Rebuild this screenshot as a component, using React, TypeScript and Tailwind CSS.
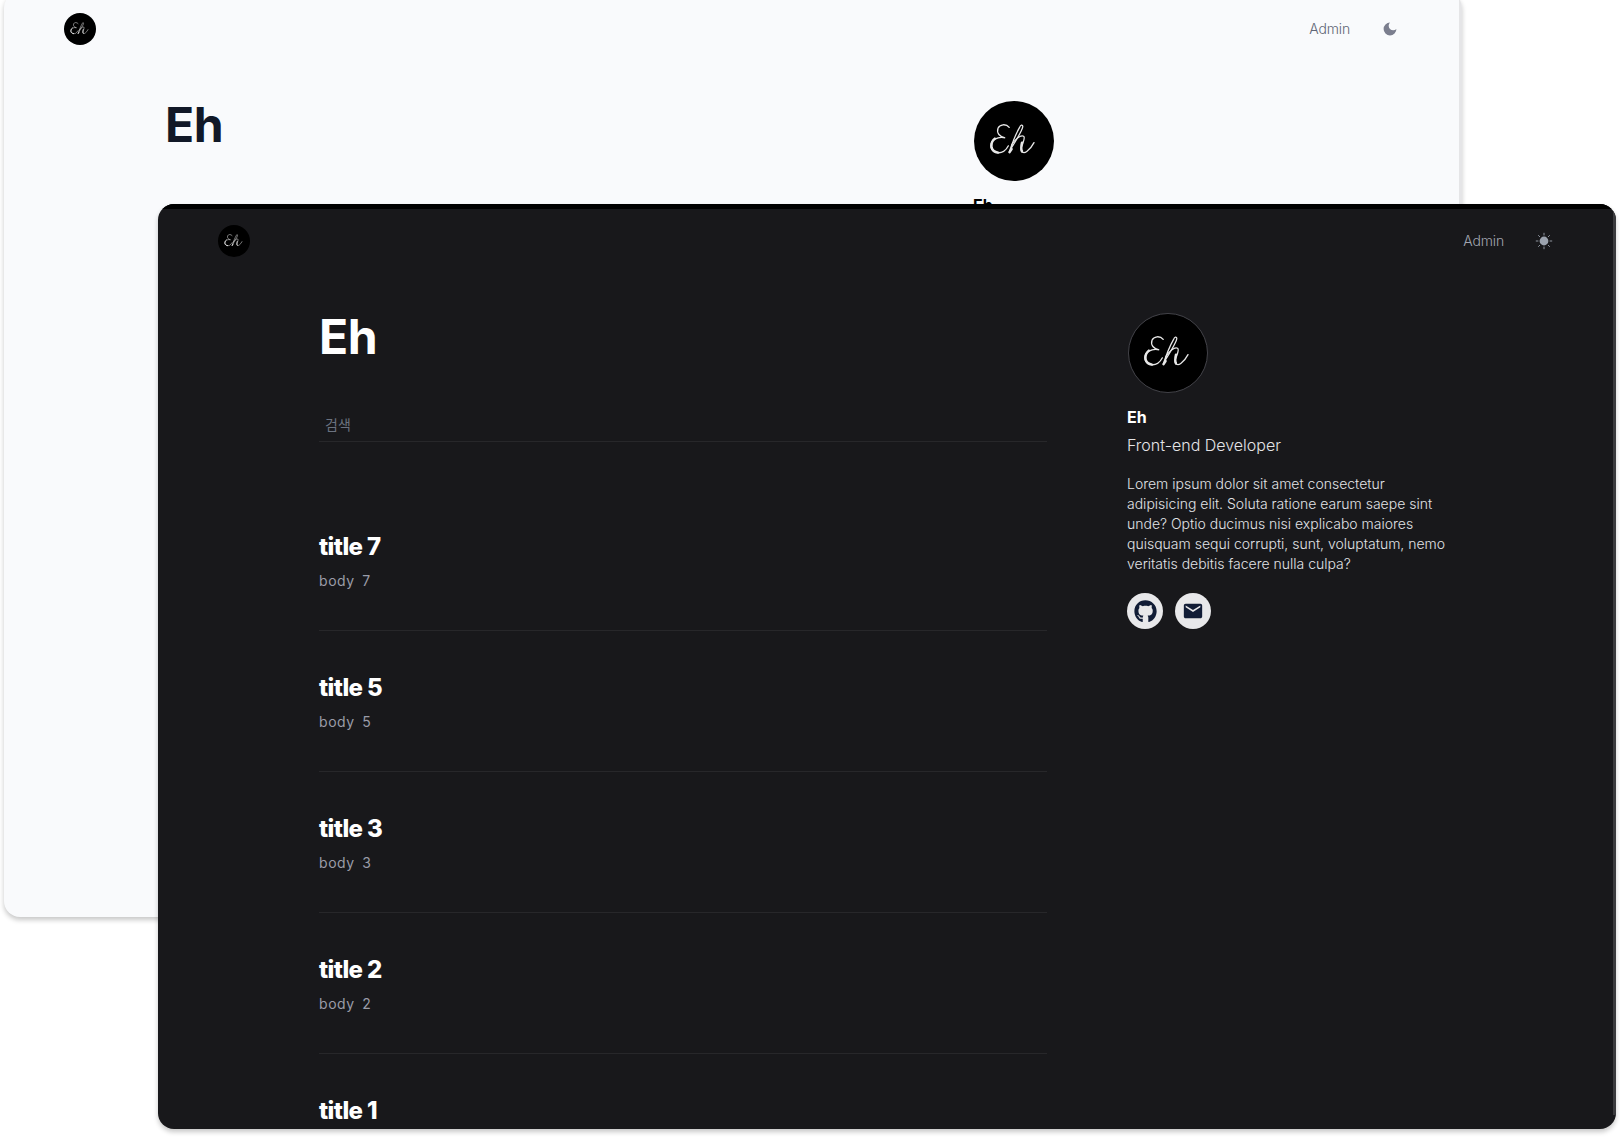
import { FaGithub } from "react-icons/fa";
import { MdEmail } from "react-icons/md";

const posts = [
  ["title 7", "body 7"],
  ["title 5", "body 5"],
  ["title 3", "body 3"],
  ["title 2", "body 2"],
  ["title 1", "body 1"],
];

function Logo({ size, border }: { size: number; border?: boolean }) {
  return (
    <svg width={size} height={size} viewBox="0 0 100 100" className="shrink-0 block">
      <circle cx="50" cy="50" r={border ? 49.4 : 50} fill="#000" stroke={border ? "#45454b" : "none"} strokeWidth={border ? 1.2 : 0} />
      <g fill="none" stroke="#e8e8e8" strokeWidth="1.6" strokeLinecap="round">
        <path d="M44 33C40 28 32 29 30 34C28 40 32 45 39 46C29 44 21 49 21 56C21 63 30 67 37 63C40 61 42 58 43 56" />
        <path d="M44 64C48 52 53 40 57 33C58 30 61 29 61 32C61 36 56 44 46 60" />
        <path d="M47 55C51 48 58 42 62 44C65 46 60 54 59 59C58 64 62 66 66 63C70 60 73 56 75 52" />
        <path d="M26 47C22 50 21.5 54 22 58C23 62 26 64 30 64.5M47 60L44.5 64M60 52C59 56 58.5 60 60 63" strokeWidth="3" />
      </g>
    </svg>
  );
}

function Sun() {
  return (
    <svg width="18" height="18" viewBox="0 0 18 18" className="block" fill="#9ca3af">
      <circle cx="9" cy="9" r="4.4" />
      <g stroke="#9ca3af" strokeWidth="0.9" strokeLinecap="round">
        <path d="M9 1.2V3M9 15V16.8M1.2 9H3M15 9H16.8M3.5 3.5L4.7 4.7M13.3 13.3L14.5 14.5M3.5 14.5L4.7 13.3M13.3 4.7L14.5 3.5" />
      </g>
    </svg>
  );
}

function Moon() {
  return (
    <svg width="14" height="14" viewBox="0 0 14 14" className="block" fill="#7b7e8e">
      <path d="M7 0.6A6.4 6.4 0 1 0 13.4 7A4.4 4.4 0 0 1 7 0.6Z" />
    </svg>
  );
}

function Window({ dark, className }: { dark: boolean; className: string }) {
  return (
    <section
      className={
        "absolute w-[1458px] h-[925px] overflow-hidden rounded-2xl shadow-[0_3px_5px_rgba(0,0,0,0.22)] " +
        (dark ? "bg-[#18181b] " : "bg-[#f9fafc] ") +
        className
      }
    >
      <div className="h-[5px] bg-black" />
      <header className="flex items-center justify-between h-[64px] pl-[60px] pr-[63px]">
        <Logo size={32} />
        <nav className="flex items-center gap-[31px]">
          <span className={"text-sm font-light tracking-[-0.01em] " + (dark ? "text-[#a1a5b0]" : "text-[#5f6675]")}>Admin</span>
          <span className="flex w-[18px] justify-center">{dark ? <Sun /> : <Moon />}</span>
        </nav>
      </header>
      <main className="flex pl-[161px] pt-[40px] gap-[80px]">
        <div className="w-[728px]">
          <h1 className={"text-5xl font-[650] tracking-[-0.01em] " + (dark ? "text-white" : "text-[#111827]")}>Eh</h1>
          <input
            placeholder="검색"
            className={
              "mt-12 block w-full h-[33px] px-1.5 pt-[5px] pb-[7px] text-sm bg-transparent border-b outline-none placeholder:text-[#6b7280] " +
              (dark ? "border-[#27272a]" : "border-[#e5e7eb]")
            }
          />
          <ul className="mt-12">
            {posts.map(([title, body]) => (
              <li key={title} className={"pt-[41px] pb-[39px] border-b " + (dark ? "border-[#27272a]" : "border-[#e5e7eb]")}>
                <h2 className={"text-2xl font-extrabold tracking-tight " + (dark ? "text-white" : "text-[#111827]")}>{title}</h2>
                <p className="mt-2 text-sm tracking-[0.04em] [word-spacing:3px] text-[#9a9ca8]">{body}</p>
              </li>
            ))}
          </ul>
        </div>
        <aside className="w-[326px]">
          <div className="ml-px">
            <Logo size={80} border={dark} />
          </div>
          <p className={"mt-3 font-bold " + (dark ? "text-white" : "text-black")}>Eh</p>
          <p className={"mt-1 font-light " + (dark ? "text-[#e4e4e7]" : "text-[#374151]")}>Front-end Developer</p>
          <p className={"mt-[17px] text-sm font-light leading-5 " + (dark ? "text-[#e0e2e6]" : "text-[#374151]")}>
            Lorem ipsum dolor sit amet consectetur adipisicing elit. Soluta ratione earum saepe sint unde? Optio ducimus nisi explicabo maiores quisquam sequi corrupti, sunt, voluptatum, nemo veritatis debitis facere nulla culpa?
          </p>
          <div className="mt-[19px] flex gap-3">
            <a className="flex h-9 w-9 items-center justify-center rounded-full bg-[#e8e8ea] text-[#111c36]">
              <FaGithub size={23} />
            </a>
            <a className="flex h-9 w-9 items-center justify-center rounded-full bg-[#e8e8ea] text-[#111c36]">
              <MdEmail size={22} />
            </a>
          </div>
        </aside>
      </main>
      <div className={"absolute right-0 top-[5px] bottom-[14px] w-[3px] " + (dark ? "bg-[#3a3a3d]" : "bg-[#e5e5e7]")} />
    </section>
  );
}

export default function App() {
  return (
    <div className="relative h-[1137px] w-[1620px] overflow-hidden bg-white font-['Inter','Noto_Sans_CJK_KR',sans-serif]">
      <Window dark={false} className="left-[4px] top-[-8px]" />
      <Window dark={true} className="left-[158px] top-[204px]" />
    </div>
  );
}
